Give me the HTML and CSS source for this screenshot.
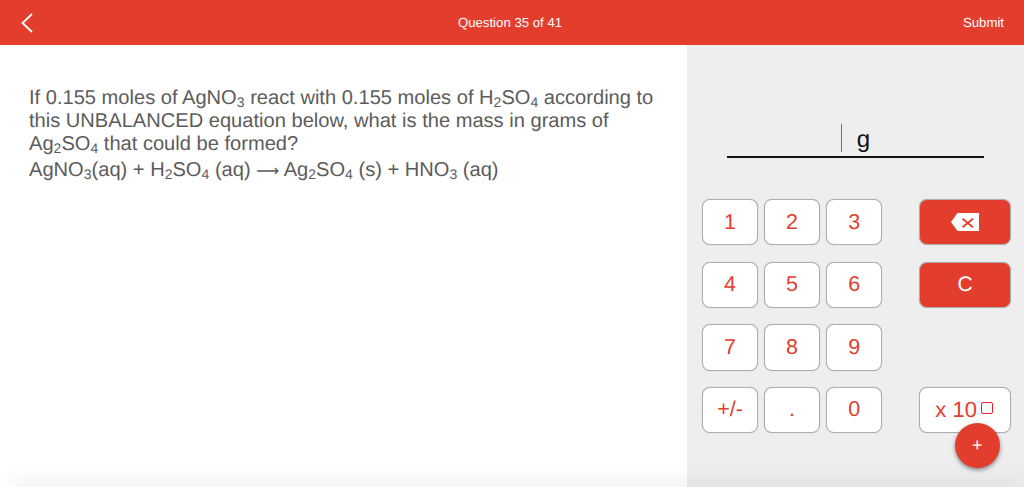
FILE: index.html
```html
<!DOCTYPE html>
<html lang="en">
<head>
<meta charset="utf-8">
<title>Question 35 of 41</title>
<link rel="stylesheet" href="styles.css">
</head>
<body>
<header class="topbar">
  <button class="back" aria-label="Back">
    <svg width="14" height="22" viewBox="0 0 14 22"><path d="M12 2 2.500 11l9.500 9" fill="none" stroke="#fff" stroke-width="1.800"/></svg>
  </button>
  <div class="title">Question 35 of 41</div>
  <div class="submit">Submit</div>
</header>
<main class="main">
  <section class="question">
    <p>If 0.155 moles of AgNO<sub>3</sub> react with 0.155 moles of H<sub>2</sub>SO<sub>4</sub> according to this UNBALANCED equation below, what is the mass in grams of Ag<sub>2</sub>SO<sub>4</sub> that could be formed?</p>
    <p class="equation">AgNO<sub>3</sub>(aq) + H<sub>2</sub>SO<sub>4</sub> (aq) <span class="arrow">⟶</span> Ag<sub>2</sub>SO<sub>4</sub> (s) + HNO<sub>3</sub> (aq)</p>
  </section>
  <section class="calc">
    <div class="answer"><span class="caret"></span><span class="unit">g</span></div>
    <div class="pad">
      <div class="digits">
        <div class="key">1</div><div class="key">2</div><div class="key">3</div>
        <div class="key">4</div><div class="key">5</div><div class="key">6</div>
        <div class="key">7</div><div class="key">8</div><div class="key">9</div>
        <div class="key">+/-</div><div class="key">.</div><div class="key">0</div>
      </div>
      <div class="actions">
        <div class="key key-red">
          <svg width="28" height="18" viewBox="0 0 28 18"><path d="M6.500 0H28v18H6.500L0 9z" fill="#fff"/><path d="M11.500 5.700l10.500 8.600M22 5.700l-10.500 8.600" stroke="#e33d2e" stroke-width="1.800"/></svg>
        </div>
        <div class="key key-red key-c">C</div>
        <div class="key key-hidden"></div>
        <div class="key key-exp">x 10<span class="box"></span>
          <div class="fab">+</div>
        </div>
      </div>
    </div>
  </section>
</main>
<div class="bottom-shadow"></div>
</body>
</html>
```
FILE: styles.css
```css
* { box-sizing: border-box; }
html, body { height: 100%; }
body {
  margin: 0;
  display: flex;
  flex-direction: column;
  height: 487px;
  overflow: hidden;
  position: relative;
  font-family: "Liberation Sans", Arial, sans-serif;
  text-rendering: geometricPrecision;
  background: #fff;
}
.topbar {
  height: 45px;
  flex: none;
  background: #e33d2e;
  color: #fff;
  display: grid;
  grid-template-columns: 1fr auto 1fr;
  align-items: center;
  padding: 0 20px;
  font-size: 13.200px;
}
.back {
  background: none;
  border: 0;
  padding: 0;
  justify-self: start;
  display: flex;
}
.title { transform: translateX(-2px); }
.submit { justify-self: end; }
.main { flex: 1; display: flex; min-height: 0; }
.question {
  width: 687px;
  flex: none;
  padding: 42px 30px 0 29px;
  color: #5c5c5c;
  font-size: 20.100px;
  line-height: 23px;
}
.question p { margin: 0; }
.question .equation { margin-top: 3px; }
sub { font-size: 14px; line-height: 0; vertical-align: -3px; }
.arrow { font-size: 16px; }
.calc {
  flex: 1;
  background: #eee;
  padding-left: 15px;
  position: relative;
}
.answer {
  width: 257px;
  margin: 76px 0 0 25px;
  height: 37px;
  border-bottom: 2px solid #111;
  display: flex;
  justify-content: center;
  align-items: flex-end;
}
.caret {
  width: 1px;
  height: 28px;
  background: #2f80d0;
  margin: 0 15px 4px 0;
}
.unit { font-size: 24px; line-height: 32px; color: #111; }
.pad {
  display: flex;
  gap: 36.700px;
  margin-top: 41px;
}
.digits {
  display: grid;
  grid-template-columns: repeat(3, 56px);
  grid-auto-rows: 46.400px;
  column-gap: 6.100px;
  row-gap: 16.200px;
}
.actions {
  display: grid;
  grid-template-columns: 92.500px;
  grid-auto-rows: 46.400px;
  row-gap: 16.200px;
}
.key {
  background: #fff;
  border: 1px solid #aeaeae;
  border-radius: 8px;
  color: #e33d2e;
  font-size: 21.500px;
  display: flex;
  align-items: center;
  justify-content: center;
  position: relative;
  box-shadow: 0 0 1px rgba(0,0,0,.25);
}
.key-red { background: #e33d2e; color: #fff; }
.key-c { font-size: 21px; }
.key-hidden { visibility: hidden; }
.key-exp { font-size: 22px; padding-right: 2px; }
.box {
  display: inline-block;
  width: 12px;
  height: 12px;
  border: 1px solid #e8222c;
  border-radius: 2px;
  margin: 0 0 4px 4px;
}
.fab {
  position: absolute;
  left: 35px;
  top: 35px;
  width: 45px;
  height: 45px;
  border-radius: 50%;
  background: #e33d2e;
  color: #fff;
  font-size: 18px;
  display: flex;
  align-items: center;
  justify-content: center;
  box-shadow: 0 2px 4px rgba(0,0,0,.45);
}
.bottom-shadow {
  position: absolute;
  left: 14px;
  right: 0;
  bottom: -2px;
  height: 2px;
  box-shadow: 0 0 22px 3px rgba(0,0,0,.13);
}
```
